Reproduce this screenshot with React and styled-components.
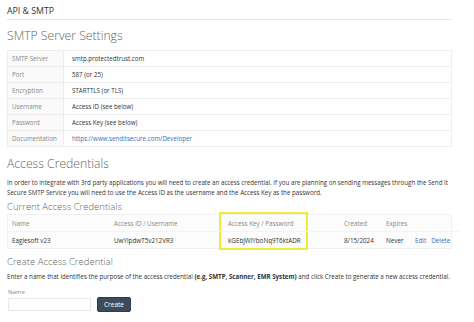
import React from "react";
import styled, { createGlobalStyle } from "styled-components";

const Global = createGlobalStyle`
  html, body { margin: 0; padding: 0; background: #fff; }
  body { font-family: "Open Sans", "Liberation Sans", sans-serif; color: #333; }
`;

const Page = styled.div`
  width: 474px;
  height: 322px;
  overflow: hidden;
  padding: 4px 22px 0 7px;
  box-sizing: border-box;
`;

const TopTitle = styled.div`
  font-size: 8.8px;
  line-height: 14px;
  color: #333;
  padding-bottom: 1px;
  border-bottom: 1px solid #e6e6e6;
`;

const Heading = styled.h2`
  font-weight: 300;
  font-size: 12.2px;
  line-height: 16px;
  color: #666;
  margin: ${p => p.$mt}px 0 ${p => p.$mb}px;
`;

const SubHeading = styled.h3`
  font-weight: 300;
  font-size: 9.5px;
  line-height: 12px;
  color: #666;
  margin: ${p => p.$mt}px 0 ${p => p.$mb}px;
`;

const Table = styled.table`
  width: 100%;
  border-collapse: collapse;
  font-size: 6.2px;
  border: 1px solid #eee;
`;

const Label = styled.td`
  width: 47px;
  padding: 0 4px;
  height: 15px;
  color: #888;
  background: #fafafa;
  border: 1px solid #eee;
`;

const Value = styled.td`
  padding: 0 8px;
  height: 15px;
  color: #333;
  border: 1px solid #eee;
`;

const Link = styled.a`
  color: #3a70b3;
  text-decoration: none;
`;

const Para = styled.p`
  font-size: 6.2px;
  line-height: 9.5px;
  margin: 0 0 ${p => p.$mb}px;
  color: #333;
  white-space: ${p => (p.$nowrap ? "nowrap" : "normal")};
`;

const CredGrid = styled.div`
  display: grid;
  grid-template-columns: 102px 114px 116px 42px 29px 1fr;
  font-size: 6.3px;
  background: #fcfcfc;
  border: 1px solid #f0f0f0;
`;

const Cell = styled.div`
  position: relative;
  display: flex;
  align-items: center;
  height: 16px;
  padding: 0 4px;
  white-space: nowrap;
  color: ${p => (p.$head ? "#888" : "#333")};
  border-bottom: ${p => (p.$head ? "1px solid #f3f3f3" : "none")};
`;

const Highlight = styled.div`
  position: absolute;
  left: -5px;
  width: 85px;
  top: ${p => p.$top}px;
  bottom: ${p => p.$bottom}px;
  border: 2px solid #f2ea3a;
  border-${p => p.$side}: none;
  pointer-events: none;
`;

const Action = styled.a`
  color: #3a70b3;
  text-decoration: none;
  margin-right: 5px;
`;

const FieldLabel = styled.div`
  font-size: 6px;
  color: #888;
  margin: 6px 0 1px 1px;
`;

const FormRow = styled.div`
  display: flex;
  align-items: center;
  gap: 6px;
`;

const Input = styled.input`
  width: 83px;
  height: 13px;
  box-sizing: border-box;
  border: 1px solid #e8e8e8;
  margin: 0 0 0 1px;
  padding: 0;
`;

const Button = styled.button`
  background: #3d4b5c;
  color: #fff;
  border: 1px solid #2f3b48;
  border-radius: 2px;
  font-family: inherit;
  font-size: 6.5px;
  height: 15px;
  width: 34px;
  padding: 0;
`;

const settings = [
  ["SMTP Server", "smtp.protectedtrust.com"],
  ["Port", "587 (or 25)"],
  ["Encryption", "STARTTLS (or TLS)"],
  ["Username", "Access ID (see below)"],
  ["Password", "Access Key (see below)"],
  ["Documentation", "https://www.senditsecure.com/Developer", true],
];

export default function App() {
  return (
    <>
      <Global />
      <Page>
        <TopTitle>API &amp; SMTP</TopTitle>
        <Heading $mt={8} $mb={6}>SMTP Server Settings</Heading>
        <Table>
          <tbody>
            {settings.map(([k, v, link]) => (
              <tr key={k}>
                <Label>{k}</Label>
                <Value>{link ? <Link href="#">{v}</Link> : v}</Value>
              </tr>
            ))}
          </tbody>
        </Table>
        <Heading $mt={9} $mb={6}>Access Credentials</Heading>
        <Para $mb={4}>
          In order to integrate with 3rd party applications you will need to create an access credential. If you are planning on sending messages through the Send It Secure SMTP Service you will need to use the Access ID as the username and the Access Key as the password.
        </Para>
        <SubHeading $mt={0} $mb={1}>Current Access Credentials</SubHeading>
        <CredGrid>
          <Cell $head>Name</Cell>
          <Cell $head>Access ID / Username</Cell>
          <Cell $head>
            <Highlight $top={-3} $bottom={0} $side="bottom" />
            Access Key / Password
          </Cell>
          <Cell $head>Created</Cell>
          <Cell $head>Expires</Cell>
          <Cell $head />
          <Cell>Eaglesoft v23</Cell>
          <Cell>UwYlpdwT5v212VR3</Cell>
          <Cell>
            <Highlight $top={0} $bottom={-2} $side="top" />
            kGEbjWlYboNq9T6ktADR
          </Cell>
          <Cell>8/15/2024</Cell>
          <Cell>Never</Cell>
          <Cell><Action href="#">Edit</Action><Action href="#">Delete</Action></Cell>
        </CredGrid>
        <SubHeading $mt={7} $mb={4}>Create Access Credential</SubHeading>
        <Para $mb={0} $nowrap>
          Enter a name that identifies the purpose of the access credential <b>(e.g, SMTP, Scanner, EMR System)</b> and click Create to generate a new access credential.
        </Para>
        <FieldLabel>Name</FieldLabel>
        <FormRow>
          <Input />
          <Button>Create</Button>
        </FormRow>
      </Page>
    </>
  );
}
